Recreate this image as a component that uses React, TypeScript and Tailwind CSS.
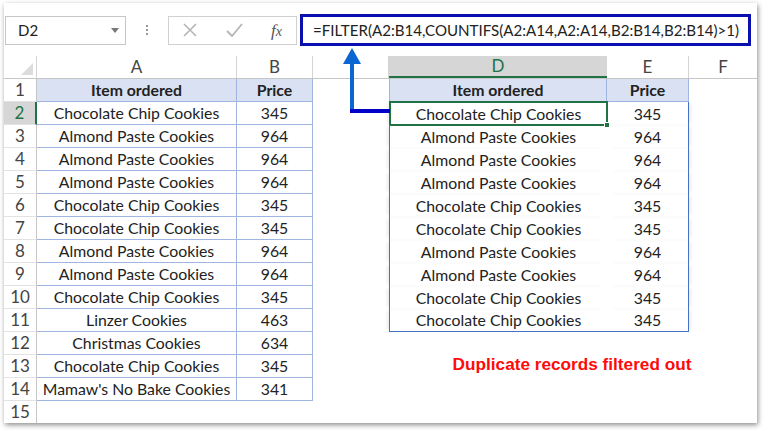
import React from 'react';

const rows: [string, string][] = [
    ['Chocolate Chip Cookies', '345'],
    ['Almond Paste Cookies', '964'],
    ['Almond Paste Cookies', '964'],
    ['Almond Paste Cookies', '964'],
    ['Chocolate Chip Cookies', '345'],
    ['Chocolate Chip Cookies', '345'],
    ['Almond Paste Cookies', '964'],
    ['Almond Paste Cookies', '964'],
    ['Chocolate Chip Cookies', '345'],
    ['Linzer Cookies', '463'],
    ['Christmas Cookies', '634'],
    ['Chocolate Chip Cookies', '345'],
    ["Mamaw's No Bake Cookies", '341'],
];

// rows that survive the FILTER
const filtered = rows.filter((r) => rows.filter((x) => x[0] === r[0] && x[1] === r[1]).length > 1);

const font = { fontFamily: 'Lato, "Open Sans", sans-serif' };

const Arrow = () => (
    <svg className="absolute left-0 top-0 pointer-events-none" width="768" height="431">
        <polygon points="352,48 343,64 361,64" fill="#0a66d0" />
        <rect x="350" y="63" width="4" height="50" fill="#0a66d0" />
        <rect x="350" y="109" width="40" height="4" fill="#0000c8" />
    </svg>
);

const FormulaBar = () => (
    <div className="flex items-center h-[50px] pt-[10px] pb-[6px]">
        {/* Name box */}
        <div className="flex items-center justify-between w-[121px] h-[29px] ml-[1px] border border-[#c6c6c6] pl-[12px] pr-[6px] text-[15px] text-[#222]">
            <span>D2</span>
            <svg width="8" height="5" viewBox="0 0 8 5"><polygon points="0,0 8,0 4,5" fill="#777" /></svg>
        </div>
        {/* dots */}
        <div className="w-[42px] flex flex-col items-center gap-[2px]">
            <div className="w-[2px] h-[2px] bg-[#999]" />
            <div className="w-[2px] h-[2px] bg-[#999]" />
            <div className="w-[2px] h-[2px] bg-[#999]" />
        </div>
        {/* cancel / enter / fx */}
        <div className="flex items-center w-[129px] h-[29px] border border-[#d0d0d0] px-[14px] justify-between">
            <svg width="14" height="14" viewBox="0 0 14 14"><path d="M1 1 L13 13 M13 1 L1 13" stroke="#b5b5b5" strokeWidth="1.6" /></svg>
            <svg width="17" height="14" viewBox="0 0 17 14"><path d="M1 8 L6 13 L16 1" stroke="#b5b5b5" strokeWidth="1.8" fill="none" /></svg>
            <span className="text-[17px] italic text-[#555] leading-none" style={{ fontFamily: '"Liberation Serif", serif' }}>
                f<span className="text-[14px]">x</span>
            </span>
        </div>
        {/* formula */}
        <div className="ml-[3px] flex items-center w-[451px] h-[32px] border-[3px] border-[#0a10b0] pl-[10px] text-[15.1px] text-[#222]">
            =FILTER(A2:B14,COUNTIFS(A2:A14,A2:A14,B2:B14,B2:B14)&gt;1)
        </div>
    </div>
);

const ColHeader = () => (
    <div className="flex h-[23px] border-b border-[#c6c6c6] text-[17px] text-[#444] mt-[3px]">
        <div className="relative w-[33px] border-r border-[#d4d4d4]">
            <svg className="absolute right-[3px] bottom-[3px]" width="12" height="12" viewBox="0 0 12 12"><polygon points="12,0 12,12 0,12" fill="#dcdcdc" /></svg>
        </div>
        <div className="w-[200px] flex items-center justify-center border-r border-[#d4d4d4]">A</div>
        <div className="w-[76px] flex items-center justify-center border-r border-[#d4d4d4]">B</div>
        {/* C header sits under the arrow */}
        <div className="w-[76px] border-r border-[#d4d4d4]" />
        <div className="w-[218px] flex items-center justify-center bg-[#d6d6d6] border-b-2 border-[#217346] text-[#217346]">D</div>
        <div className="w-[82px] flex items-center justify-center border-r border-[#d4d4d4]">E</div>
        <div className="flex-1 flex items-center justify-center">F</div>
    </div>
);

const SheetRow = ({ n }: { n: number }) => {
    const left = n === 1 ? ['Item ordered', 'Price'] : rows[n - 2];
    const right = n === 1 ? ['Item ordered', 'Price'] : filtered[n - 2];
    const head = n === 1;
    const inRight = n >= 2 && n <= 11;
    return (
        <div className="flex h-[23px] text-[15.8px] text-[#222]">
            <div className={`w-[33px] flex items-center justify-center text-[17px] border-b border-[#e2e2e2] ${n === 2 ? 'bg-[#d6d6d6] text-[#217346] border-r-2 border-r-[#217346]' : 'text-[#444] border-r border-r-[#c6c6c6]'}`}>
                {n}
            </div>
            {left ? (
                <>
                    <div className={`w-[200px] flex items-center justify-center border-r border-b border-[#9fb5e2] ${head ? 'bg-[#d9e1f2] font-bold' : ''}`}>{left[0]}</div>
                    <div className={`w-[76px] flex items-center justify-center border-r border-b border-[#9fb5e2] ${head ? 'bg-[#d9e1f2] font-bold' : ''}`}>{left[1]}</div>
                </>
            ) : (
                <div className="w-[276px]" />
            )}
            <div className="w-[76px]" />
            {head && (
                <>
                    <div className="w-[218px] flex items-center justify-center bg-[#d9e1f2] font-bold border-r border-b border-l border-[#9fb5e2]">{right[0]}</div>
                    <div className="w-[82px] flex items-center justify-center bg-[#d9e1f2] font-bold border-r border-b border-[#9fb5e2]">{right[1]}</div>
                </>
            )}
            {inRight && (
                <>
                    <div className={`relative w-[218px] flex items-center justify-center border-l border-[#4472c4] shadow-[-3px_0_4px_-2px_rgba(0,0,0,0.12)] ${n === 11 ? 'border-b' : ''}`}>
                        {n === 2 && (
                            <div className="absolute inset-[-1px] border-2 border-[#217346] pointer-events-none">
                                <div className="absolute right-[-4px] bottom-[-4px] w-[6px] h-[6px] bg-[#217346] border border-white" />
                            </div>
                        )}
                        {right[0]}
                    </div>
                    <div className={`w-[82px] flex items-center justify-center border-r border-[#4472c4] shadow-[3px_0_4px_-2px_rgba(0,0,0,0.12)] ${n === 11 ? 'border-b' : ''}`}>{right[1]}</div>
                </>
            )}
            {n === 14 && (
                <div className="w-[366px] flex items-end justify-center pb-[1px] text-[17.2px] font-bold text-[#ff0a0a] -translate-y-[22px]" style={{ fontFamily: '"Liberation Sans", Arial, sans-serif' }}>
                    Duplicate records filtered out
                </div>
            )}
        </div>
    );
};

export default function App() {
    return (
        <div className="relative w-[768px] h-[431px] bg-white overflow-hidden" style={font}>
            <div className="ml-[4px] mt-[3px] w-[753px] h-[420px] bg-white shadow-[1px_2px_5px_rgba(0,0,0,0.45)] overflow-hidden">
                <FormulaBar />
                <ColHeader />
                {Array.from({ length: 15 }, (_, i) => (
                    <SheetRow key={i} n={i + 1} />
                ))}
            </div>
            <Arrow />
        </div>
    );
}
